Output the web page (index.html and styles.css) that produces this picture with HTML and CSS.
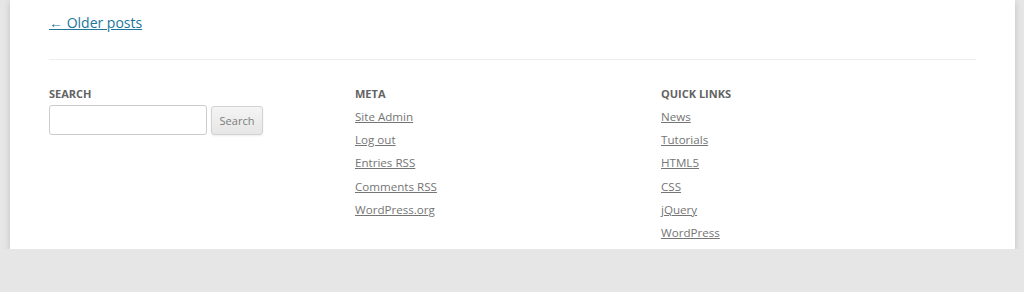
FILE: index.html
```html
<!DOCTYPE html>
<html lang="en">
<head>
    <meta charset="UTF-8">
    <meta name="viewport" content="width=device-width, initial-scale=1.0">
    <title>Blog</title>
    <link rel="stylesheet" href="styles.css">
</head>
<body>
    <div class="site">
        <nav class="nav-below">
            <a href="#" class="nav-previous"><span class="meta-nav">&larr;</span> Older posts</a>
        </nav>
        <div class="widget-area">
            <aside class="widget">
                <h3 class="widget-title">Search</h3>
                <form class="search-form">
                    <input type="text" class="search-field">
                    <button type="button" class="search-submit">Search</button>
                </form>
            </aside>
            <aside class="widget">
                <h3 class="widget-title">Meta</h3>
                <ul>
                    <li><a href="#">Site Admin</a></li>
                    <li><a href="#">Log out</a></li>
                    <li><a href="#">Entries RSS</a></li>
                    <li><a href="#">Comments RSS</a></li>
                    <li><a href="#">WordPress.org</a></li>
                </ul>
            </aside>
            <aside class="widget">
                <h3 class="widget-title">Quick Links</h3>
                <ul>
                    <li><a href="#">News</a></li>
                    <li><a href="#">Tutorials</a></li>
                    <li><a href="#">HTML5</a></li>
                    <li><a href="#">CSS</a></li>
                    <li><a href="#">jQuery</a></li>
                    <li><a href="#">WordPress</a></li>
                </ul>
            </aside>
        </div>
    </div>
</body>
</html>
```

FILE: styles.css
```css
body {
    font-family: "Open Sans", "Liberation Sans", sans-serif;
    background-color: #e6e6e6;
    margin: 0;
    padding: 0;
    color: #444;
}
.site {
    background: #fff;
    margin: 0 9px 0 10px;
    padding: 0 39px 5px 39px;
    box-shadow: 0 2px 6px rgba(100, 100, 100, 0.3);
}
.nav-below {
    padding: 11px 0 25px;
    border-bottom: 1px solid #ededed;
    line-height: 22px;
}
.nav-previous {
    font-size: 14px;
    color: #21759b;
    text-decoration: underline;
}
.widget-area {
    display: grid;
    grid-template-columns: 306px 306px 1fr;
    padding-top: 26px;
}
.widget-title {
    margin: 0 0 3px;
    font-size: 11px;
    font-weight: bold;
    line-height: 16px;
    text-transform: uppercase;
    color: #636363;
}
.widget ul {
    list-style: none;
    margin: 0;
    padding: 0;
}
.widget li {
    font-size: 11.6px;
    line-height: 23.2px;
}
.widget li a {
    color: #757575;
    text-decoration: underline;
}
.search-form {
    display: flex;
    align-items: center;
    gap: 4px;
    margin-top: 2px;
}
.search-field {
    width: 158px;
    height: 30px;
    box-sizing: border-box;
    border: 1px solid #ccc;
    border-radius: 3px;
    padding: 4px 6px;
    font-family: inherit;
}
.search-submit {
    width: 52px;
    height: 29px;
    box-sizing: border-box;
    border: 1px solid #d2d2d2;
    border-radius: 3px;
    background: linear-gradient(#f4f4f4, #e6e6e6);
    color: #7c7c7c;
    font-family: inherit;
    font-size: 11px;
    padding: 0;
    box-shadow: 0 1px 2px rgba(64, 64, 64, 0.1);
}
```
